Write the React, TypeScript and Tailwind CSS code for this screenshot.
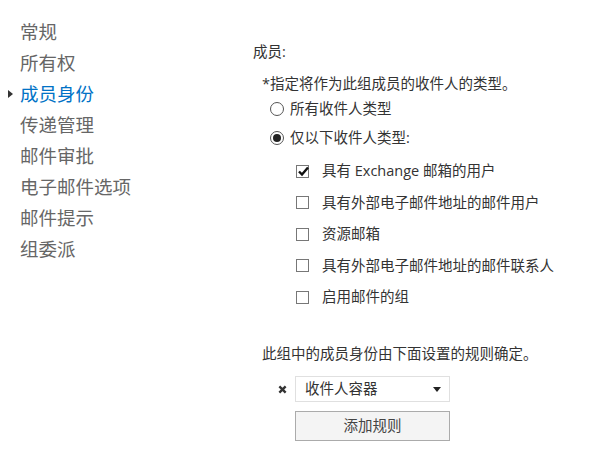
import React from "react";

const navItems = [
  "常规",
  "所有权",
  "成员身份",
  "传递管理",
  "邮件审批",
  "电子邮件选项",
  "邮件提示",
  "组委派",
];

const recipientTypes = [
  { label: "具有 Exchange 邮箱的用户", checked: true },
  { label: "具有外部电子邮件地址的邮件用户", checked: false },
  { label: "资源邮箱", checked: false },
  { label: "具有外部电子邮件地址的邮件联系人", checked: false },
  { label: "启用邮件的组", checked: false },
];

const font = "font-['Open_Sans','Noto_Sans_CJK_SC',sans-serif]";

function Radio({ checked }: { checked?: boolean }) {
  return (
    <span className="flex h-[14px] w-[14px] items-center justify-center rounded-full border border-[#555] bg-white">
      {checked && <span className="h-[8px] w-[8px] rounded-full bg-[#222]" />}
    </span>
  );
}

function Checkbox({ checked }: { checked?: boolean }) {
  return (
    <span className="relative flex h-[13px] w-[13px] items-center justify-center border border-[#777] bg-white">
      {checked && (
        <svg viewBox="0 0 13 13" className="absolute -top-[1px] left-0 h-[13px] w-[13px]">
          <path d="M2 6.5 L5 9.5 L11 2.5" fill="none" stroke="#111" strokeWidth="2.4" />
        </svg>
      )}
    </span>
  );
}

export default function App() {
  return (
    <div className={`flex h-[456px] w-[610px] bg-white ${font}`}>
      <nav className="w-[253px] shrink-0 pt-[16px]">
        {navItems.map((item) => {
          const active = item === "成员身份";
          return (
            <div key={item} className="relative flex h-[31px] items-center pl-[20px]">
              {active && (
                <span className="absolute left-[8px] top-1/2 h-0 w-0 -translate-y-1/2 border-y-[4px] border-l-[5px] border-y-transparent border-l-[#333]" />
              )}
              <span
                className={`text-[18.5px] leading-[31px] ${active ? "text-[#0072c6]" : "text-[#666]"}`}
              >
                {item}
              </span>
            </div>
          );
        })}
      </nav>

      <main className="flex-1 pt-[42px] text-[14.5px] leading-[20px] text-[#333]">
        <div>成员:</div>
        <div className="mt-[12px] pl-[9px]">*指定将作为此组成员的收件人的类型。</div>

        <div className="mt-[5px] flex items-center gap-[6px] pl-[17px]">
          <Radio />
          <span>所有收件人类型</span>
        </div>
        <div className="mt-[9px] flex items-center gap-[6px] pl-[17px]">
          <Radio checked />
          <span>仅以下收件人类型:</span>
        </div>

        <div className="mt-[13px] flex flex-col gap-[11.5px] pl-[43px]">
          {recipientTypes.map((t) => (
            <div key={t.label} className="flex items-center gap-[13px]">
              <Checkbox checked={t.checked} />
              <span>{t.label}</span>
            </div>
          ))}
        </div>

        <div className="mt-[37px] pl-[9px]">此组中的成员身份由下面设置的规则确定。</div>

        <div className="mt-[12px] flex items-center">
          <span className="flex w-[42px] justify-end pr-[8px]">
            <svg viewBox="0 0 10 10" className="h-[9px] w-[9px]">
              <path d="M1.5 1.5 L8.5 8.5 M8.5 1.5 L1.5 8.5" stroke="#333" strokeWidth="2.6" />
            </svg>
          </span>
          <div className="flex h-[26px] w-[155px] items-center justify-between border border-[#e0e0e0] bg-white pl-[9px] pr-[8px]">
            <span>收件人容器</span>
            <span className="h-0 w-0 border-x-[4px] border-t-[5px] border-x-transparent border-t-[#222]" />
          </div>
        </div>

        <div className="mt-[9px] pl-[42px]">
          <button className="h-[30px] w-[155px] border border-[#ababab] bg-[#f4f4f4] text-[#444]">
            添加规则
          </button>
        </div>
      </main>
    </div>
  );
}
